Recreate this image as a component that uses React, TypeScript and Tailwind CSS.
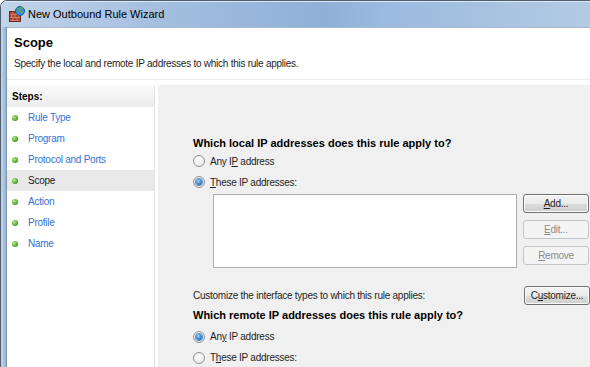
import React from 'react';

const steps = ['Rule Type', 'Program', 'Protocol and Ports', 'Scope', 'Action', 'Profile', 'Name'];

const FirewallIcon = () => (
    <svg width="16" height="16" viewBox="0 0 16 16">
        <rect x="0.5" y="5.5" width="11" height="10" fill="#a8432f" stroke="#6e2418" />
        <path d="M1 8.5h10M1 11.5h10M1 14.5h10M4 6v2.5M8 6v2.5M2.5 8.5v3M6 8.5v3M10 8.5v3M4 11.5v3M8 11.5v3" stroke="#d98b6f" strokeWidth="0.8" />
        <circle cx="11" cy="5" r="4.5" fill="#3a8ed8" stroke="#1d5c9b" />
        <path d="M8 3.5c1.2-.8 2.2 0 2.4 1 .3 1.3 1.6 1.2 1.9 2.4M11.5 1c.4.9 1.6 1.1 2.6 1.5" stroke="#57b33a" strokeWidth="1.6" fill="none" />
    </svg>
);

const Radio = ({ checked }: { checked?: boolean }) => (
    <span className="relative flex h-[12px] w-[12px] items-center justify-center rounded-full border border-[#8f9396] bg-[radial-gradient(circle_at_40%_35%,#ffffff,#e2e3e6)]">
        {checked && (
            <span className="h-[6px] w-[6px] rounded-full bg-[radial-gradient(circle_at_40%_35%,#9fd4f7,#1f6ec0_70%)] shadow-[0_0_0_1px_#5a8fc4]" />
        )}
    </span>
);

const Option = ({ checked, children }: { checked?: boolean; children: React.ReactNode }) => (
    <div className="flex h-[21px] items-center">
        <Radio checked={checked} />
        <span className="ml-[5px] text-[#1e1e1e]">{children}</span>
    </div>
);

const Button = ({ children, disabled }: { children: React.ReactNode; disabled?: boolean }) => (
    <div
        className={
            disabled
                ? 'flex h-[19px] w-[66px] items-center justify-center rounded-[3px] border border-[#c3c6c9] bg-[#f4f4f4] text-[#8d8d8d]'
                : 'flex h-[19px] w-[66px] items-center justify-center rounded-[3px] border border-[#707070] bg-[linear-gradient(#f3f3f3,#ebebeb_50%,#dddddd_50%,#cfcfcf)] text-[#1e1e1e] shadow-[inset_0_0_0_1px_#fcfcfc]'
        }
    >
        {children}
    </div>
);

const App = () => {
    return (
        <div className="flex h-[367px] w-[590px] flex-col overflow-hidden rounded-tl-[7px] border-l border-t border-[#4f5d6d] bg-white font-['Liberation_Sans',Arial,sans-serif] text-[10px] tracking-[-0.25px] text-[#1e1e1e]">
            {/* title bar */}
            <div className="flex h-[26px] shrink-0 items-center bg-[linear-gradient(90deg,#c2d4e9,#a5c0e0_25%,#8fb0d7_55%,#9bbadf_65%,#b3cae3)] pl-[8px] shadow-[inset_0_1px_0_#dfe9f5]">
                <FirewallIcon />
                <span className="ml-[3px] text-[11px] tracking-normal text-black">New Outbound Rule Wizard</span>
            </div>

            <div className="flex min-h-0 flex-1">
                {/* window frame */}
                <div className="w-[6px] shrink-0 border-r border-[#7e95b0] bg-[linear-gradient(90deg,#c4d6ea,#a6c1e0_60%,#92b2d8)]" />

                <div className="flex min-w-0 flex-1 flex-col border-t border-[#aab8c8] bg-white">
                    {/* header */}
                    <div className="h-[52px] shrink-0 border-b border-[#ececec] pl-[7px] pt-[5px]">
                        <div className="text-[13px] font-bold tracking-normal text-black">Scope</div>
                        <div className="mt-[3px]">Specify the local and remote IP addresses to which this rule applies.</div>
                    </div>

                    <div className="flex min-h-0 flex-1 pt-[5px]">
                        {/* steps */}
                        <div className="w-[148px] shrink-0 border-r border-[#e2e2e2] bg-white">
                            <div className="flex h-[22px] items-center bg-[linear-gradient(#fbfbfb,#ececec)] pl-[5px] font-bold tracking-normal text-black">
                                Steps:
                            </div>
                            {steps.map((s) => (
                                <div
                                    key={s}
                                    className={s === 'Scope' ? 'flex h-[21px] items-center bg-[#e9e9e9] pl-[5px]' : 'flex h-[21px] items-center pl-[5px]'}
                                >
                                    <span className="h-[6px] w-[6px] rounded-full bg-[radial-gradient(circle_at_35%_35%,#b6ec8c,#49a523_65%,#2f7d17)]" />
                                    <span className={s === 'Scope' ? 'ml-[10px] text-[#1e1e1e]' : 'ml-[10px] text-[#3571d6]'}>{s}</span>
                                </div>
                            ))}
                        </div>

                        {/* main */}
                        <div className="ml-[3px] flex-1 bg-[#f0f0f0] pl-[35px] pt-[50px]">
                            <div className="text-[11px] font-bold tracking-normal text-black">Which local IP addresses does this rule apply to?</div>
                            <div className="-mt-[1px]">
                                <Option>
                                    Any I<u>P</u> address
                                </Option>
                                <Option checked>
                                    <u>T</u>hese IP addresses:
                                </Option>
                            </div>
                            <div className="mt-[1px] flex pl-[20px]">
                                <div className="h-[74px] w-[304px] border border-[#abadb3] bg-white" />
                                <div className="ml-[6px] flex flex-col gap-[7px]">
                                    <Button>
                                        <u>A</u>dd...
                                    </Button>
                                    <Button disabled>
                                        <u>E</u>dit...
                                    </Button>
                                    <Button disabled>
                                        <u>R</u>emove
                                    </Button>
                                </div>
                            </div>
                            <div className="mt-[18px] flex items-center justify-between">
                                <span>Customize the interface types to which this rule applies:</span>
                                <Button>
                                    C<u>u</u>stomize...
                                </Button>
                            </div>
                            <div className="mt-[2px] text-[11px] font-bold tracking-normal text-black">Which remote IP addresses does this rule apply to?</div>
                            <div className="mt-[3px]">
                                <Option checked>
                                    An<u>y</u> IP address
                                </Option>
                                <Option>
                                    T<u>h</u>ese IP addresses:
                                </Option>
                            </div>
                        </div>
                    </div>
                </div>
            </div>
        </div>
    );
};

export default App;
